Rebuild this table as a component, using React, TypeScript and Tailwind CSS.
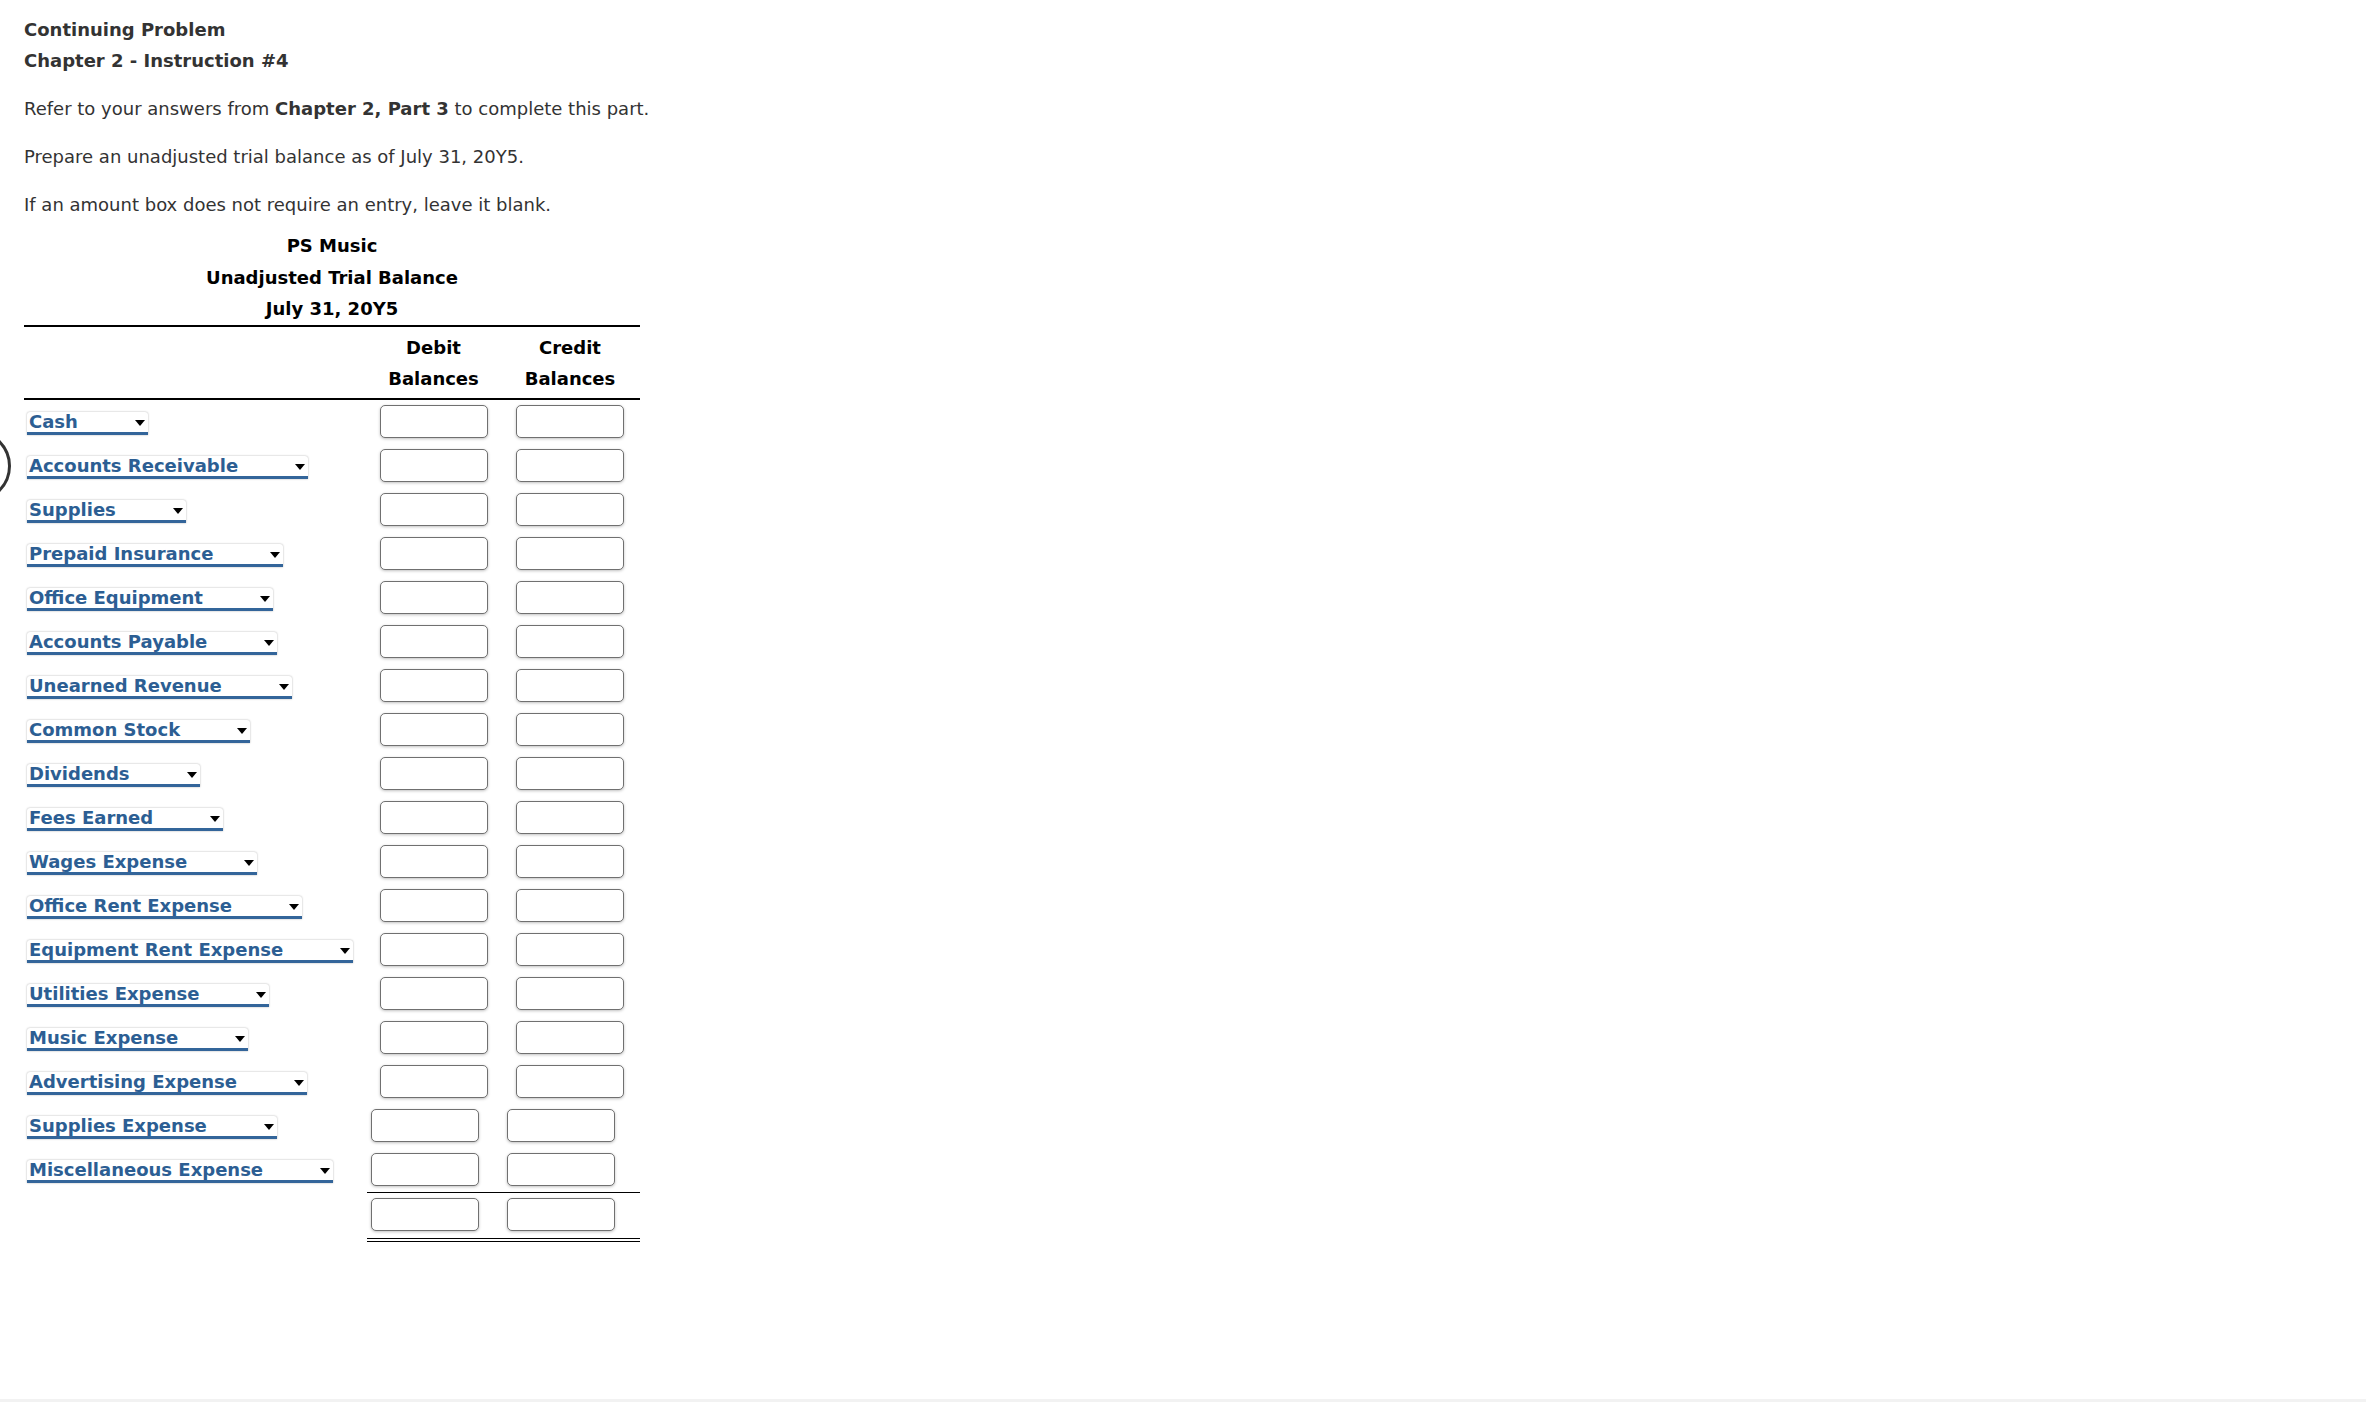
const accounts = [
  'Cash',
  'Accounts Receivable',
  'Supplies',
  'Prepaid Insurance',
  'Office Equipment',
  'Accounts Payable',
  'Unearned Revenue',
  'Common Stock',
  'Dividends',
  'Fees Earned',
  'Wages Expense',
  'Office Rent Expense',
  'Equipment Rent Expense',
  'Utilities Expense',
  'Music Expense',
  'Advertising Expense',
  'Supplies Expense',
  'Miscellaneous Expense',
];

function AccountSelect({ label }: { label: string }) {
  return (
    <div className="inline-flex h-[23px] items-end rounded-t-[3px] border-b-[3px] border-[#33659a] bg-white pl-[2px] pr-[3px] shadow-[0_0_2px_rgba(0,0,0,0.35)]">
      <span className="text-[18px] font-bold leading-[20px] text-[#2c5e93]">{label}</span>
      <svg className="mb-[6px] ml-[57px]" width="10" height="6" viewBox="0 0 10 6">
        <path d="M0 0 H10 L5 6 Z" fill="#000" />
      </svg>
    </div>
  );
}

function AmountBox({ shifted }: { shifted?: boolean }) {
  return (
    <div
      className={`h-[33px] w-[108px] rounded-[5px] border-[1.5px] border-[#707070] bg-white shadow-[0_1px_3px_rgba(0,0,0,0.25)] ${
        shifted ? 'mr-[18px]' : ''
      }`}
    />
  );
}

export default function App() {
  return (
    <div className="relative flex min-h-[1402px] flex-col overflow-hidden bg-white font-['Verdana','DejaVu_Sans',sans-serif] text-[18px] text-[#333]">
      <div className="absolute left-[-61px] top-[430px] h-[72px] w-[72px] rounded-full border-[3px] border-[#333]" />
      <div className="flex-1 pl-6 pt-[14px]">
        <p className="font-bold leading-[31px]">Continuing Problem</p>
        <p className="font-bold leading-[31px]">Chapter 2 - Instruction #4</p>
        <p className="mt-[17px] leading-[31px]">
          Refer to your answers from <b>Chapter 2, Part 3</b> to complete this part.
        </p>
        <p className="mt-[17px] leading-[31px]">Prepare an unadjusted trial balance as of July 31, 20Y5.</p>
        <p className="mt-[17px] leading-[31px]">If an amount box does not require an entry, leave it blank.</p>

        <div className="mt-[10px] w-[616px]">
          <div className="text-center font-bold leading-[31.5px] text-black">
            <div>PS Music</div>
            <div>Unadjusted Trial Balance</div>
            <div>July 31, 20Y5</div>
          </div>

          <div className="grid grid-cols-[343px_133px_140px] border-y-2 border-black pb-[4px] pt-[5px] text-center font-bold leading-[31px] text-black">
            <div />
            <div>
              Debit
              <br />
              Balances
            </div>
            <div>
              Credit
              <br />
              Balances
            </div>
          </div>

          {accounts.map((name, i) => {
            const shifted = i >= 16;
            return (
              <div key={name} className="grid h-[44px] grid-cols-[343px_133px_140px] items-center">
                <div className="pl-[3px]">
                  <AccountSelect label={name} />
                </div>
                <div className="flex justify-center">
                  <AmountBox shifted={shifted} />
                </div>
                <div className="flex justify-center">
                  <AmountBox shifted={shifted} />
                </div>
              </div>
            );
          })}

          <div className="ml-[343px] border-t border-black">
            <div className="grid h-[44px] grid-cols-[133px_140px] items-center">
              <div className="flex justify-center">
                <AmountBox shifted />
              </div>
              <div className="flex justify-center">
                <AmountBox shifted />
              </div>
            </div>
            <div className="mt-[1px] h-[1px] bg-black" />
            <div className="mt-[2px] h-[1px] bg-black" />
          </div>
        </div>
      </div>
      <div className="h-[3px] bg-[#f2f2f2]" />
    </div>
  );
}
